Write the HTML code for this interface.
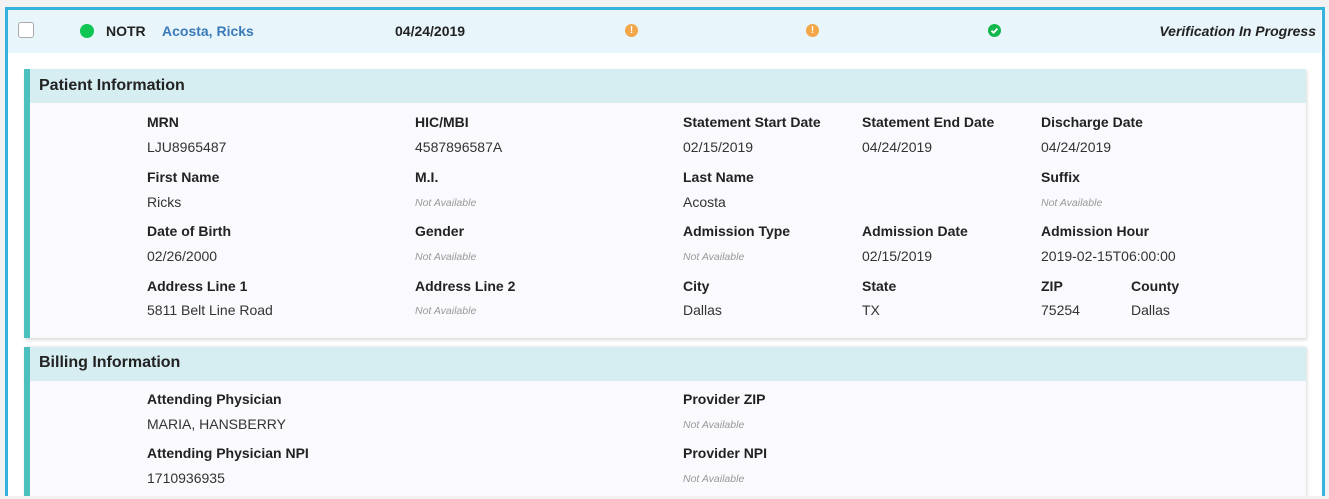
<!DOCTYPE html>
<html style="overflow:hidden;height:499px"><head><style>
*{margin:0;padding:0;box-sizing:border-box}
body{width:1329px;height:499px;background:#f2f2f2;position:relative;overflow:hidden;font-family:"Liberation Sans",sans-serif;color:#222}
.a{position:absolute;white-space:nowrap;line-height:16px}
.l{font-weight:bold;font-size:14px;color:#222}
.v{font-size:14px;color:#333}
.n{font-size:10.5px;font-style:italic;color:#999}
</style></head><body>
<div style="position:absolute;left:5px;top:7px;width:1320px;height:492px;border:3px solid #35b3dd;border-bottom:none;background:#fff"></div>
<div style="position:absolute;left:8px;top:10px;width:1313px;height:43px;background:#e8f6fb"></div>
<div style="position:absolute;left:18px;top:22px;width:16px;height:16px;border:1px solid #aaa;border-radius:3px;background:#fff"></div>
<div style="position:absolute;left:80px;top:24px;width:14px;height:14px;border-radius:50%;background:#0fc653"></div>
<div class="a l" style="left:106px;top:23px">NOTR</div>
<div class="a l" style="left:162px;top:23px;color:#3a7ab8">Acosta, Ricks</div>
<div class="a l" style="left:395px;top:23px">04/24/2019</div>
<div style="position:absolute;left:625px;top:24px;width:13px;height:13px;border-radius:50%;background:#f2a648;color:#fff;font-size:10px;font-weight:bold;text-align:center;line-height:13px">!</div>
<div style="position:absolute;left:806px;top:24px;width:13px;height:13px;border-radius:50%;background:#f2a648;color:#fff;font-size:10px;font-weight:bold;text-align:center;line-height:13px">!</div>
<div style="position:absolute;left:988px;top:24px;width:13px;height:13px;border-radius:50%;background:#12b84c"><svg width="13" height="13"><path d="M3.5 6.7L5.6 8.7L9.4 4.6" stroke="#fff" stroke-width="1.8" fill="none"/></svg></div>
<div class="a l" style="right:13px;top:23px;font-style:italic">Verification In Progress</div>

<div style="position:absolute;left:24px;top:69px;width:1282px;height:269px;background:#f9f9fe;box-shadow:1px 2px 3px rgba(0,0,0,.15);border-left:6px solid #4cc0bc"></div>
<div style="position:absolute;left:30px;top:69px;width:1276px;height:34px;background:#d6edf1"></div>
<div class="a" style="left:39px;top:77px;font-size:16px;font-weight:bold;line-height:18px">Patient Information</div>

<div style="position:absolute;left:24px;top:347px;width:1282px;height:152px;background:#f9f9fe;box-shadow:1px 0 3px rgba(0,0,0,.15);border-left:6px solid #4cc0bc"></div>
<div style="position:absolute;left:30px;top:347px;width:1276px;height:34px;background:#d6edf1"></div>
<div class="a" style="left:39px;top:354px;font-size:16px;font-weight:bold;line-height:18px">Billing Information</div>

<div class="a l" style="left:147px;top:114px">MRN</div><div class="a v" style="left:147px;top:139px">LJU8965487</div>
<div class="a l" style="left:415px;top:114px">HIC/MBI</div><div class="a v" style="left:415px;top:139px">4587896587A</div>
<div class="a l" style="left:683px;top:114px">Statement Start Date</div><div class="a v" style="left:683px;top:139px">02/15/2019</div>
<div class="a l" style="left:862px;top:114px">Statement End Date</div><div class="a v" style="left:862px;top:139px">04/24/2019</div>
<div class="a l" style="left:1041px;top:114px">Discharge Date</div><div class="a v" style="left:1041px;top:139px">04/24/2019</div>

<div class="a l" style="left:147px;top:169px">First Name</div><div class="a v" style="left:147px;top:194px">Ricks</div>
<div class="a l" style="left:415px;top:169px">M.I.</div><div class="a n" style="left:415px;top:195px">Not Available</div>
<div class="a l" style="left:683px;top:169px">Last Name</div><div class="a v" style="left:683px;top:194px">Acosta</div>
<div class="a l" style="left:1041px;top:169px">Suffix</div><div class="a n" style="left:1041px;top:195px">Not Available</div>

<div class="a l" style="left:147px;top:223px">Date of Birth</div><div class="a v" style="left:147px;top:248px">02/26/2000</div>
<div class="a l" style="left:415px;top:223px">Gender</div><div class="a n" style="left:415px;top:249px">Not Available</div>
<div class="a l" style="left:683px;top:223px">Admission Type</div><div class="a n" style="left:683px;top:249px">Not Available</div>
<div class="a l" style="left:862px;top:223px">Admission Date</div><div class="a v" style="left:862px;top:248px">02/15/2019</div>
<div class="a l" style="left:1041px;top:223px">Admission Hour</div><div class="a v" style="left:1041px;top:248px">2019-02-15T06:00:00</div>

<div class="a l" style="left:147px;top:278px">Address Line 1</div><div class="a v" style="left:147px;top:302px">5811 Belt Line Road</div>
<div class="a l" style="left:415px;top:278px">Address Line 2</div><div class="a n" style="left:415px;top:303px">Not Available</div>
<div class="a l" style="left:683px;top:278px">City</div><div class="a v" style="left:683px;top:302px">Dallas</div>
<div class="a l" style="left:862px;top:278px">State</div><div class="a v" style="left:862px;top:302px">TX</div>
<div class="a l" style="left:1041px;top:278px">ZIP</div><div class="a v" style="left:1041px;top:302px">75254</div>
<div class="a l" style="left:1131px;top:278px">County</div><div class="a v" style="left:1131px;top:302px">Dallas</div>

<div class="a l" style="left:147px;top:391px">Attending Physician</div><div class="a v" style="left:147px;top:416px">MARIA, HANSBERRY</div>
<div class="a l" style="left:683px;top:391px">Provider ZIP</div><div class="a n" style="left:683px;top:417px">Not Available</div>
<div class="a l" style="left:147px;top:445px">Attending Physician NPI</div><div class="a v" style="left:147px;top:470px">1710936935</div>
<div class="a l" style="left:683px;top:445px">Provider NPI</div><div class="a n" style="left:683px;top:471px">Not Available</div>
<div style="position:absolute;left:0;top:496px;width:1329px;height:3px;background:#f2f2f2"></div>
</body></html>
